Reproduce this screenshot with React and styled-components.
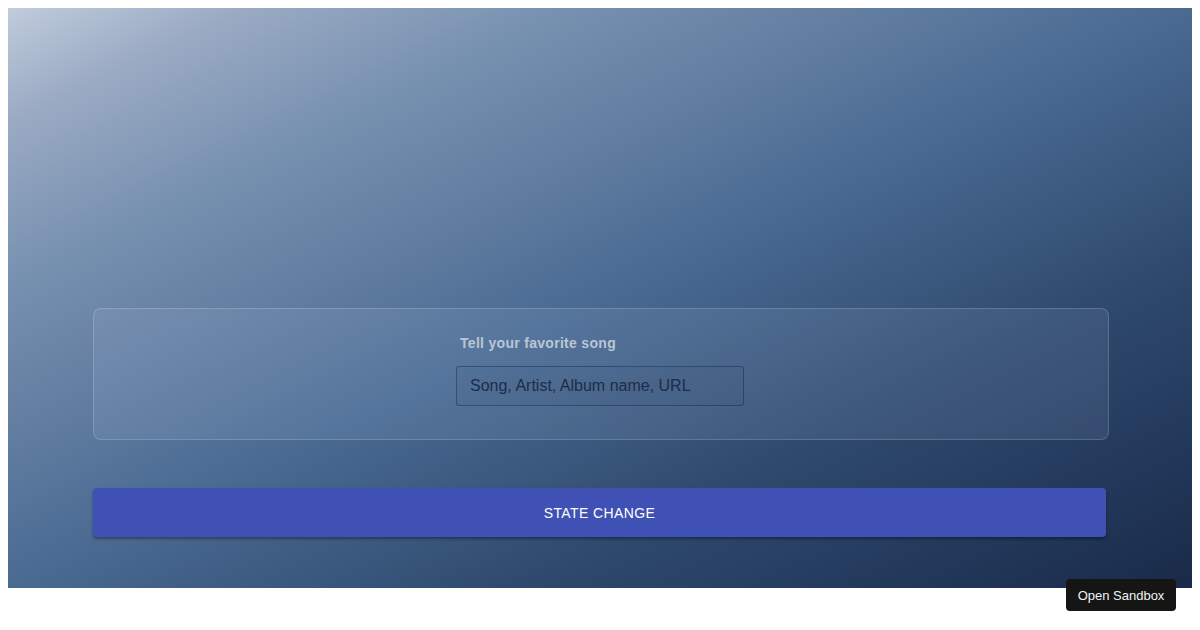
import React from "react";
import styled, { createGlobalStyle } from "styled-components";

const Global = createGlobalStyle`
  body {
    margin: 8px;
    background: #ffffff;
    font-family: "Liberation Sans", Arial, sans-serif;
  }
`;

const Stage = styled.div`
  height: 580px;
  box-sizing: border-box;
  background: linear-gradient(
    to bottom right,
    #c0ccdc 0%,
    #9aaac3 10%,
    #7690b0 24%,
    #6a84a6 32%,
    #4a6a92 50%,
    #2f4a6e 71%,
    #263e62 82%,
    #1a2a48 100%
  );
  display: flex;
  flex-direction: column;
  justify-content: flex-end;
  padding: 0 86px 51px 85px;
  gap: 48px;
`;

const Card = styled.div`
  height: 132px;
  box-sizing: border-box;
  border-radius: 8px;
  background: rgba(200, 220, 250, 0.1);
  border: 1px solid rgba(255, 255, 255, 0.16);
  display: flex;
  justify-content: center;
  padding-top: 26px;
  margin-right: -3px;
`;

const Field = styled.div`
  display: flex;
  flex-direction: column;
  width: 288px;
  gap: 15px;
  margin-right: 2px;
`;

const Label = styled.label`
  font-size: 14px;
  font-weight: 700;
  color: #bac6d6;
  padding-left: 4px;
  letter-spacing: 0.3px;
`;

const Input = styled.input`
  height: 40px;
  box-sizing: border-box;
  border-radius: 3px;
  border: 1px solid rgba(20, 38, 66, 0.45);
  background: rgba(30, 50, 80, 0.04);
  padding: 0 13px;
  font-family: "Liberation Sans", Arial, sans-serif;
  font-size: 16px;
  color: #1d2d48;
  outline: none;
  &::placeholder {
    color: #1d2d48;
    opacity: 1;
  }
`;

const Button = styled.button`
  height: 49px;
  border: none;
  border-radius: 4px;
  background: #3f51b5;
  color: #ffffff;
  font-family: "Liberation Sans", Arial, sans-serif;
  font-size: 14px;
  letter-spacing: 0.4px;
  text-transform: uppercase;
  box-shadow: 0 2px 3px rgba(0, 0, 0, 0.35);
  cursor: pointer;
`;

const SandboxButton = styled.button`
  position: fixed;
  right: 24px;
  bottom: 19px;
  width: 110px;
  height: 32px;
  border: none;
  border-radius: 4px;
  background: #151515;
  color: #f2f2f2;
  font-family: "Liberation Sans", Arial, sans-serif;
  font-size: 13px;
`;

export default function App() {
  return (
    <>
      <Global />
      <Stage>
        <Card>
          <Field>
            <Label>Tell your favorite song</Label>
            <Input placeholder="Song, Artist, Album name, URL" />
          </Field>
        </Card>
        <Button>State change</Button>
      </Stage>
      <SandboxButton>Open Sandbox</SandboxButton>
    </>
  );
}
